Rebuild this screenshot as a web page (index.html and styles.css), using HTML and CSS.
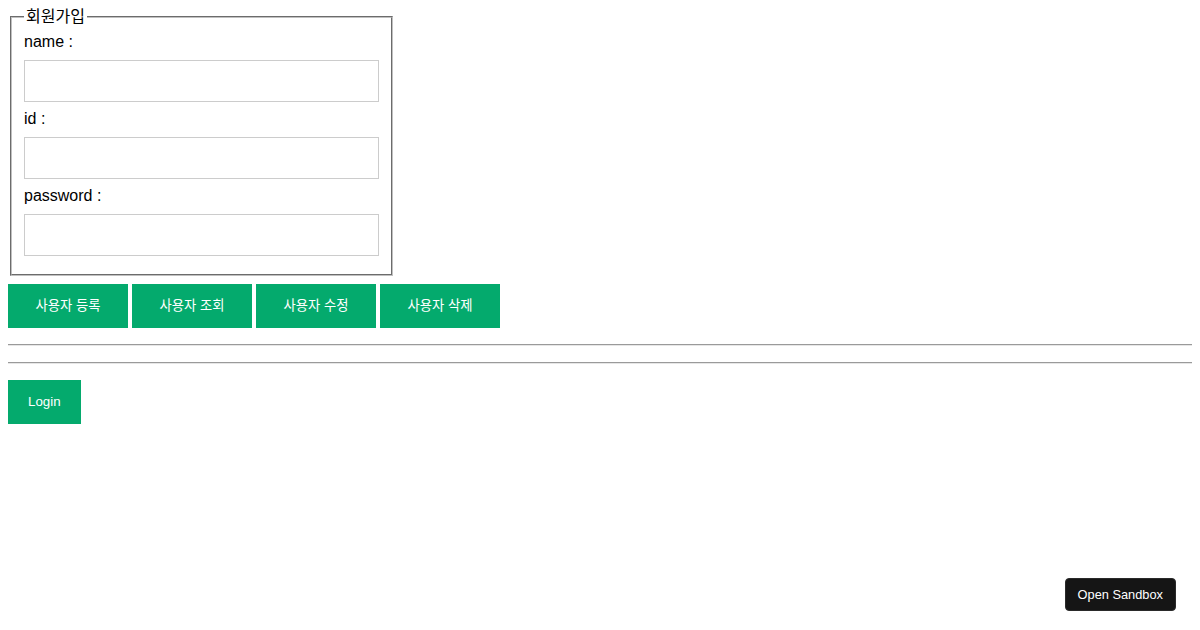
FILE: index.html
```html
<!DOCTYPE html>
<html lang="ko">
<head>
  <meta charset="UTF-8" />
  <meta name="viewport" content="width=device-width, initial-scale=1.0"/>
  <title>회원가입</title>
  <link rel="stylesheet" href="styles.css">
</head>
<body>

<fieldset class="join-box">
  <legend>회원가입</legend>
  <label for="name">name :</label>
  <input type="text" id="name" />

  <label for="id">id :</label>
  <input type="text" id="id" />

  <label for="password">password :</label>
  <input type="password" id="password" />
</fieldset>

<div class="btn-row">
  <button class="btn wide">사용자 등록</button>
  <button class="btn wide">사용자 조회</button>
  <button class="btn wide">사용자 수정</button>
  <button class="btn wide">사용자 삭제</button>
</div>

<hr class="line" />
<hr class="line second" />

<button class="btn login">Login</button>

<button class="sandbox-btn">Open Sandbox</button>

</body>
</html>
```

FILE: styles.css
```css
body {
  margin: 8px;
  font-family: "Liberation Sans", Arial, "Noto Sans CJK KR", sans-serif;
  font-size: 16px;
  color: #000;
  background: #fff;
}

.join-box {
  width: 355px;
  margin: 0 2px;
  padding: 7px 12px 10px;
  border: 2px groove rgb(192, 192, 192);
}

.join-box legend {
  line-height: 18px;
  padding: 0 2px;
  font-size: 16px;
}

.join-box label {
  display: block;
  line-height: 18px;
}

.join-box input {
  display: block;
  width: 100%;
  height: 42px;
  box-sizing: border-box;
  margin: 9px 0 8px;
  padding: 0 10px;
  border: 1px solid #ccc;
  font-size: 16px;
}

.btn-row {
  display: flex;
  gap: 4px;
  margin: 8px 0 16px;
}

.btn {
  background: #04aa6d;
  color: #fff;
  border: none;
  height: 44px;
  font-family: "Liberation Sans", Arial, "Noto Sans CJK KR", sans-serif;
  font-size: 13.33px;
  line-height: 16px;
  cursor: pointer;
}

.wide {
  width: 120px;
  padding: 0;
}

.line {
  margin: 8px 0;
  height: 0;
  border: none;
  border-top: 1px solid #9a9a9a;
  border-bottom: 1px solid #e6e6e6;
}

.line.second {
  margin-top: 16px;
}

.login {
  padding: 0 20px;
  margin: 8px 0;
}

.sandbox-btn {
  position: fixed;
  right: 24px;
  bottom: 19px;
  height: 33px;
  padding: 0 12px;
  background: #151515;
  color: #fff;
  border: 1px solid #2a2a2a;
  border-radius: 4px;
  font-family: "Liberation Sans", Arial, sans-serif;
  font-size: 12.8px;
}
```
